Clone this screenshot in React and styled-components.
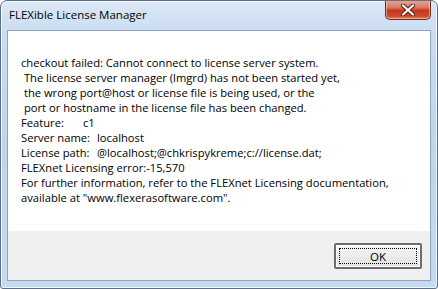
import React from "react"
import styled, { createGlobalStyle } from "styled-components"

const GlobalStyle = createGlobalStyle`
  html, body {
    margin: 0;
    padding: 0;
    background: #ffffff;
  }
  body {
    font-family: "Open Sans", "Noto Sans", sans-serif;
  }
`

const Window = styled.div`
  box-sizing: border-box;
  width: 438px;
  height: 289px;
  display: flex;
  flex-direction: column;
  border: 1px solid #5d7088;
  border-radius: 7px 7px 3px 3px;
  background: linear-gradient(180deg, #dbe8f6 0%, #c9dcf1 12%, #bfd5ee 50%, #c6daf0 100%);
  box-shadow: inset 0 0 0 1px rgba(255, 255, 255, 0.7);
  padding: 0 6px 7px 6px;
  overflow: hidden;
`

const TitleBar = styled.div`
  height: 29px;
  display: flex;
  align-items: flex-start;
  justify-content: space-between;
  flex-shrink: 0;
`

const Title = styled.div`
  padding: 6px 0 0 2px;
  font-size: 11.5px;
  line-height: 16px;
  color: #000000;
`

const CloseButton = styled.div`
  box-sizing: border-box;
  width: 46px;
  height: 20px;
  margin-top: -1px;
  border: 1px solid #6b2a1e;
  border-top: none;
  border-radius: 0 0 5px 5px;
  background: linear-gradient(180deg, #e9a99a 0%, #d8775f 40%, #c2391f 55%, #cf4a2e 85%, #e0805f 100%);
  box-shadow: inset 0 0 0 1px rgba(255, 220, 210, 0.55);
  display: flex;
  align-items: center;
  justify-content: center;
`

const Client = styled.div`
  flex: 1;
  display: flex;
  flex-direction: column;
  border: 1px solid #8ea4bf;
  background: #ffffff;
`

const MessageArea = styled.div`
  height: 200px;
  box-sizing: border-box;
  padding: 24px 0 0 13px;
  background: #ffffff;
  font-size: 11.2px;
  line-height: 15px;
  color: #000000;
`

const Line = styled.div`
  white-space: pre;
`

const Key = styled.span`
  display: inline-block;
  width: ${(p) => p.$w}px;
`

const Footer = styled.div`
  flex: 1;
  background: #f0f0f0;
  display: flex;
  justify-content: flex-end;
  align-items: flex-start;
  padding: 12px 8px 0 0;
`

const OkButton = styled.div`
  box-sizing: border-box;
  width: 88px;
  height: 26px;
  padding: 3px;
  border: 2px solid #6c6c6c;
  border-radius: 2px;
  background: linear-gradient(180deg, #f4f4f4 0%, #ececec 50%, #e2e2e2 100%);
  box-shadow: inset 0 0 0 1px #ffffff;
  display: flex;
`

const Focus = styled.div`
  flex: 1;
  border: 1px dotted #000000;
  display: flex;
  align-items: center;
  justify-content: center;
  font-size: 11.5px;
  color: #000000;
`

const CloseIcon = () => (
  <svg width="14" height="12" viewBox="0 0 14 12">
    <path
      d="M2 1.5 L12 10.5 M12 1.5 L2 10.5"
      stroke="#5a1d12"
      strokeWidth="4.2"
      strokeLinecap="round"
    />
    <path
      d="M2 1.5 L12 10.5 M12 1.5 L2 10.5"
      stroke="#ffffff"
      strokeWidth="2.2"
      strokeLinecap="round"
    />
  </svg>
)

const App = () => {
  return (
    <>
      <GlobalStyle />
      <Window>
        <TitleBar>
          <Title>FLEXible License Manager</Title>
          <CloseButton>
            <CloseIcon />
          </CloseButton>
        </TitleBar>
        <Client>
          <MessageArea>
            <Line>checkout failed: Cannot connect to license server system.</Line>
            <Line> The license server manager (lmgrd) has not been started yet,</Line>
            <Line> the wrong port@host or license file is being used, or the</Line>
            <Line> port or hostname in the license file has been changed.</Line>
            <Line>
              <Key $w={62}>Feature:</Key>c1
            </Line>
            <Line>
              <Key $w={76}>Server name:</Key>localhost
            </Line>
            <Line>
              <Key $w={76}>License path:</Key>@localhost;@chkrispykreme;c://license.dat;
            </Line>
            <Line>FLEXnet Licensing error:-15,570</Line>
            <Line>For further information, refer to the FLEXnet Licensing documentation,</Line>
            <Line>available at "www.flexerasoftware.com".</Line>
          </MessageArea>
          <Footer>
            <OkButton>
              <Focus>OK</Focus>
            </OkButton>
          </Footer>
        </Client>
      </Window>
    </>
  )
}

export default App
